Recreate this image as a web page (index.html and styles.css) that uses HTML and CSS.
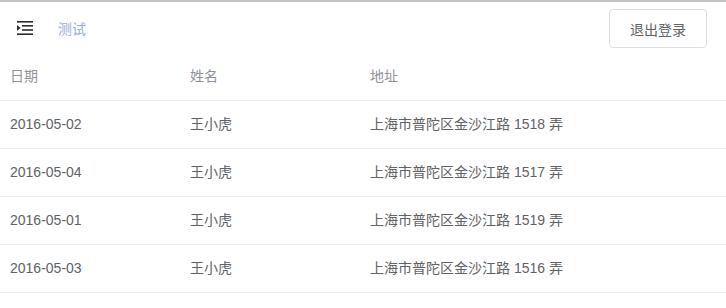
FILE: index.html
```html
<!DOCTYPE html>
<html lang="zh-CN">
<head>
  <meta charset="UTF-8">
  <title>测试</title>
  <link rel="stylesheet" href="styles.css">
</head>
<body>

  <header class="topbar">
    <span class="toggle">
      <svg width="16" height="14" viewBox="0 0 16 14">
        <rect x="0" y="0" width="16" height="1.6" fill="#2b2b2b"/>
        <rect x="5" y="4" width="11" height="1.6" fill="#2b2b2b"/>
        <rect x="5" y="8.2" width="11" height="1.6" fill="#2b2b2b"/>
        <rect x="0" y="12.4" width="16" height="1.6" fill="#2b2b2b"/>
        <polygon points="0,4 3.6,6.9 0,9.8" fill="#2b2b2b"/>
      </svg>
    </span>
    <span class="title">测试</span>
    <button class="logout">退出登录</button>
  </header>

  <table class="data-table">
    <thead>
      <tr>
        <th class="col-date">日期</th>
        <th class="col-name">姓名</th>
        <th>地址</th>
      </tr>
    </thead>
    <tbody>
      <tr><td>2016-05-02</td><td>王小虎</td><td>上海市普陀区金沙江路 1518 弄</td></tr>
      <tr><td>2016-05-04</td><td>王小虎</td><td>上海市普陀区金沙江路 1517 弄</td></tr>
      <tr><td>2016-05-01</td><td>王小虎</td><td>上海市普陀区金沙江路 1519 弄</td></tr>
      <tr><td>2016-05-03</td><td>王小虎</td><td>上海市普陀区金沙江路 1516 弄</td></tr>
    </tbody>
  </table>

</body>
</html>
```

FILE: styles.css
```css
body {
  margin: 0;
  font-family: "Liberation Sans", "Noto Sans CJK SC", sans-serif;
  font-size: 14px;
  color: #606266;
  background-color: #fff;
  border-top: 2px solid #c4c4c4;
}

.topbar {
  display: flex;
  align-items: center;
  height: 51px;
  padding: 0 19px 0 17px;
}

.toggle {
  display: flex;
  width: 16px;
  height: 14px;
  margin-right: 25px;
}

.title {
  color: #98acd0;
  font-size: 14px;
}

.logout {
  margin-left: auto;
  margin-top: 2px;
  width: 98px;
  height: 39px;
  background-color: #fff;
  border: 1px solid #dcdfe6;
  border-radius: 4px;
  font-family: inherit;
  font-size: 14px;
  color: #606266;
}

.data-table {
  width: 100%;
  border-collapse: collapse;
  table-layout: fixed;
}

.data-table th,
.data-table td {
  padding: 12px 10px;
  line-height: 23px;
  text-align: left;
  border-bottom: 1px solid #ebeef5;
}

.data-table th {
  font-weight: normal;
  color: #909399;
}

.col-date,
.col-name {
  width: 160px;
}
```
